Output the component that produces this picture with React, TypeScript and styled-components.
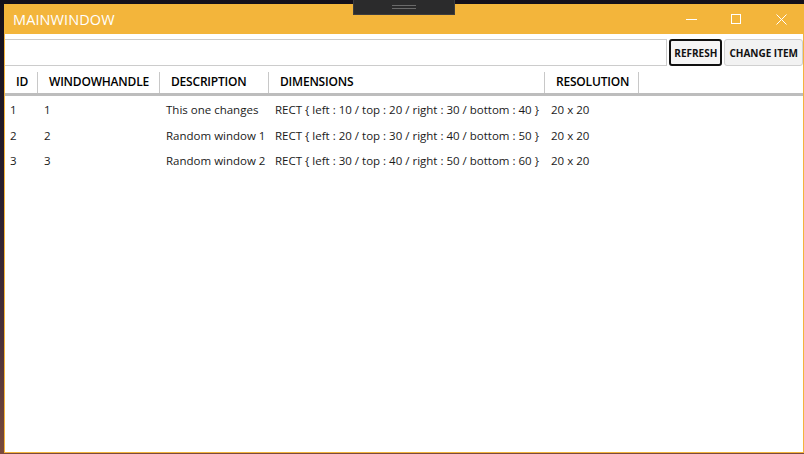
import React from "react";
import styled, { createGlobalStyle } from "styled-components";

const Global = createGlobalStyle`
  html, body { margin: 0; padding: 0; }
  body {
    width: 804px;
    height: 454px;
    overflow: hidden;
    background: linear-gradient(180deg, #14101a 0%, #2a1f2e 45%, #4a3038 75%, #7a4a3a 100%);
    font-family: "Open Sans", "Noto Sans", sans-serif;
  }
`;

const Desktop = styled.div`
  position: relative;
  width: 804px;
  height: 454px;
  padding: 4px 0 1px 4px;
  box-sizing: border-box;
`;

const Window = styled.div`
  width: 800px;
  height: 449px;
  box-sizing: border-box;
  border: 1px solid #f3b33d;
  border-top: none;
  background: #ffffff;
  display: flex;
  flex-direction: column;
`;

const TitleBar = styled.div`
  height: 30px;
  margin: 0 -1px;
  background: #f3b53b;
  display: flex;
  align-items: center;
  padding-left: 9px;
  flex-shrink: 0;
`;

const Title = styled.div`
  flex: 1;
  color: #ffffff;
  font-family: "Open Sans", sans-serif;
  font-size: 14.5px;
  letter-spacing: 0.1px;
  padding-top: 1px;
`;

const CaptionButton = styled.div`
  width: 45px;
  height: 30px;
  display: flex;
  align-items: center;
  justify-content: center;
`;

const DebugBar = styled.div`
  position: absolute;
  left: 353px;
  top: 0;
  width: 102px;
  height: 15px;
  box-sizing: border-box;
  background: #2b2b2c;
  border: 1px solid #3d3d3f;
  border-top: none;
  display: flex;
  flex-direction: column;
  align-items: center;
  justify-content: center;
  gap: 2px;
`;

const DebugLine = styled.div`
  width: 24px;
  height: 1px;
  background: #6a6a6a;
`;

const Toolbar = styled.div`
  display: flex;
  align-items: stretch;
  gap: 2px;
  height: 27px;
  margin-top: 5px;
  flex-shrink: 0;
`;

const SearchBox = styled.div`
  flex: 1;
  border: 1px solid #cccccc;
  border-left: none;
  background: #ffffff;
`;

const Button = styled.div<{ $focused?: boolean }>`
  display: flex;
  align-items: center;
  justify-content: center;
  box-sizing: border-box;
  padding: 0 ${(p) => (p.$focused ? "3px" : "4px")};
  border-radius: 3px;
  border: ${(p) => (p.$focused ? "2px solid #111111" : "1px solid #d0d0d0")};
  background: ${(p) => (p.$focused ? "#f5f5f5" : "#f2f2f2")};
  font-family: "Open Sans", sans-serif;
  font-weight: 700;
  font-size: 10px;
  color: #111111;
  white-space: nowrap;
`;

const cols = "33px 122px 109px 276px 94px 1fr";

const HeaderRow = styled.div`
  display: grid;
  grid-template-columns: ${cols};
  height: 26px;
  margin-top: 1px;
  border-bottom: 3px solid #bdbdbd;
  flex-shrink: 0;
`;

const HeaderCell = styled.div<{ $sep?: boolean }>`
  display: flex;
  align-items: center;
  padding-left: ${(p) => (p.$sep ? "11px" : "10px")};
  padding-top: 4px;
  border-right: ${(p) => (p.$sep ? "1px solid #c8c8c8" : "none")};
  margin-top: 5px;
  font-family: "Open Sans", sans-serif;
  font-weight: 600;
  font-size: 12px;
  letter-spacing: -0.2px;
  color: #000000;
  line-height: 1;
  align-self: stretch;
  box-sizing: border-box;
  padding-bottom: 5px;
`;

const Body = styled.div`
  flex: 1;
  padding-top: 1px;
`;

const Row = styled.div`
  display: grid;
  grid-template-columns: ${cols};
  height: 25.5px;
  align-items: center;
`;

const Cell = styled.div<{ $first?: boolean }>`
  padding-left: ${(p) => (p.$first ? "5px" : "6px")};
  font-family: "Open Sans", sans-serif;
  font-size: 11.5px;
  color: #1a1a1a;
  white-space: nowrap;
`;

const rows = [
  { id: 1, h: 1, d: "This one changes", r: [10, 20, 30, 40] },
  { id: 2, h: 2, d: "Random window 1", r: [20, 30, 40, 50] },
  { id: 3, h: 3, d: "Random window 2", r: [30, 40, 50, 60] },
];

export default function App() {
  return (
    <>
      <Global />
      <Desktop>
        <Window>
          <TitleBar>
            <Title>MAINWINDOW</Title>
            <CaptionButton>
              <svg width="11" height="11" viewBox="0 0 11 11">
                <line x1="0" y1="5.5" x2="11" y2="5.5" stroke="#fff" strokeWidth="1" />
              </svg>
            </CaptionButton>
            <CaptionButton>
              <svg width="11" height="11" viewBox="0 0 11 11">
                <rect x="0.5" y="0.5" width="9" height="9" fill="none" stroke="#fff" strokeWidth="1" />
              </svg>
            </CaptionButton>
            <CaptionButton>
              <svg width="11" height="11" viewBox="0 0 11 11">
                <path d="M0.5 0.5 L10.5 10.5 M10.5 0.5 L0.5 10.5" stroke="#fff" strokeWidth="1" />
              </svg>
            </CaptionButton>
          </TitleBar>
          <Toolbar>
            <SearchBox />
            <Button $focused>REFRESH</Button>
            <Button>CHANGE ITEM</Button>
          </Toolbar>
          <HeaderRow>
            <HeaderCell $sep>ID</HeaderCell>
            <HeaderCell $sep>WINDOWHANDLE</HeaderCell>
            <HeaderCell $sep>DESCRIPTION</HeaderCell>
            <HeaderCell $sep>DIMENSIONS</HeaderCell>
            <HeaderCell $sep>RESOLUTION</HeaderCell>
            <HeaderCell />
          </HeaderRow>
          <Body>
            {rows.map((r) => (
              <Row key={r.id}>
                <Cell $first>{r.id}</Cell>
                <Cell>{r.h}</Cell>
                <Cell>{r.d}</Cell>
                <Cell>
                  RECT {"{"} left : {r.r[0]} / top : {r.r[1]} / right : {r.r[2]} / bottom : {r.r[3]} {"}"}
                </Cell>
                <Cell>20 x 20</Cell>
                <Cell />
              </Row>
            ))}
          </Body>
        </Window>
        <DebugBar>
          <DebugLine />
          <DebugLine />
        </DebugBar>
      </Desktop>
    </>
  );
}
